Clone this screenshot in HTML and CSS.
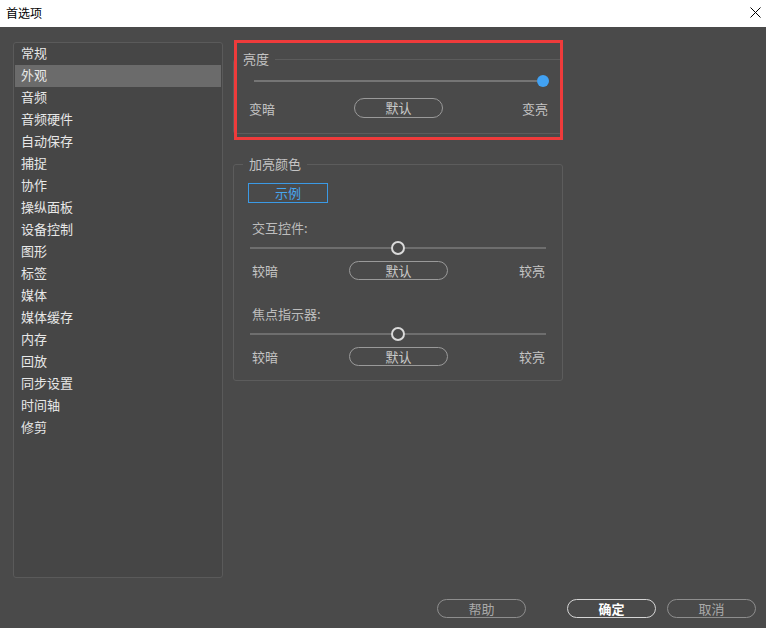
FILE: index.html
```html
<!DOCTYPE html>
<html lang="zh-CN">
<head>
<meta charset="utf-8">
<title>首选项</title>
<link rel="stylesheet" href="styles.css">
</head>
<body>
<div class="titlebar">
  <span class="title">首选项</span>
  <svg class="close" width="11" height="11" viewBox="0 0 11 11"><path d="M0.5 0.5L10.5 10.5M10.5 0.5L0.5 10.5" stroke="#000" stroke-width="1" fill="none"/></svg>
</div>
<div class="main">
  <ul class="sidebar">
    <li>常规</li>
    <li class="selected">外观</li>
    <li>音频</li>
    <li>音频硬件</li>
    <li>自动保存</li>
    <li>捕捉</li>
    <li>协作</li>
    <li>操纵面板</li>
    <li>设备控制</li>
    <li>图形</li>
    <li>标签</li>
    <li>媒体</li>
    <li>媒体缓存</li>
    <li>内存</li>
    <li>回放</li>
    <li>同步设置</li>
    <li>时间轴</li>
    <li>修剪</li>
  </ul>
  <div class="content">
    <div class="bright-wrap">
      <fieldset class="group bright">
        <legend>亮度</legend>
        <div class="slider bright-slider">
          <div class="track"></div>
          <div class="knob-blue"></div>
        </div>
        <div class="label-row bright-row">
          <span>变暗</span>
          <span class="pill">默认</span>
          <span>变亮</span>
        </div>
      </fieldset>
      <div class="highlight"></div>
    </div>
    <fieldset class="group accent">
      <legend>加亮颜色</legend>
      <div class="sample">示例</div>
      <div class="caption first">交互控件:</div>
      <div class="slider">
        <div class="track"></div>
        <div class="knob"></div>
        <div class="track"></div>
      </div>
      <div class="label-row">
        <span>较暗</span>
        <span class="pill wide">默认</span>
        <span>较亮</span>
      </div>
      <div class="caption">焦点指示器:</div>
      <div class="slider">
        <div class="track"></div>
        <div class="knob"></div>
        <div class="track"></div>
      </div>
      <div class="label-row">
        <span>较暗</span>
        <span class="pill wide">默认</span>
        <span>较亮</span>
      </div>
    </fieldset>
  </div>
</div>
<div class="footer">
  <span class="pill btn help">帮助</span>
  <span class="pill btn ok">确定</span>
  <span class="pill btn">取消</span>
</div>
</body>
</html>
```
FILE: styles.css
```css
html, body {
  margin: 0;
  padding: 0;
}
body {
  width: 766px;
  height: 628px;
  background: #4a4a4a;
  font-family: "Noto Sans CJK SC", "Noto Sans", sans-serif;
  font-size: 13px;
  color: #c4c4c4;
  display: flex;
  flex-direction: column;
  overflow: hidden;
}
.titlebar {
  height: 27px;
  flex: none;
  background: #ffffff;
  display: flex;
  align-items: center;
  justify-content: space-between;
  padding: 0 5px 0 6px;
}
.title {
  font-size: 12px;
  color: #000;
  line-height: 16px;
  margin-top: -2px;
}
.close {
  margin-top: -3px;
}
.main {
  flex: 1;
  display: flex;
  padding: 13px 0 0 13px;
  min-height: 0;
}
.sidebar {
  list-style: none;
  margin: 2px 0 0 0;
  padding: 0 1px;
  box-sizing: border-box;
  width: 210px;
  height: 536px;
  border: 1px solid #5a5a5a;
  border-radius: 3px;
  background: #464646;
}
.sidebar li {
  height: 22px;
  box-sizing: border-box;
  line-height: 20px;
  padding: 0 0 2px 6px;
  color: #e8e8e8;
}
.sidebar li.selected {
  background: #6b6b6b;
}
.content {
  margin-left: 10px;
  width: 330px;
  display: flex;
  flex-direction: column;
}
.bright-wrap {
  position: relative;
  height: 100px;
}
.group {
  margin: 0;
  border: 1px solid #5c5c5c;
  border-radius: 3px;
  min-width: 0;
}
.group legend {
  line-height: 16px;
  color: #c4c4c4;
}
.bright {
  margin-top: 11px;
  padding: 0;
  height: 83px;
  box-sizing: border-box;
}
.bright legend {
  padding: 0 6px 0 9px;
}
.highlight {
  position: absolute;
  left: 1px;
  top: 0;
  width: 329px;
  height: 100px;
  box-sizing: border-box;
  border: 3px solid #ee3b3b;
  pointer-events: none;
}
.slider {
  display: flex;
  align-items: center;
  height: 14px;
  margin: 5px 1px 0 1px;
}
.track {
  flex: 1;
  height: 2px;
  background: #6e6e6e;
}
.knob {
  width: 14px;
  height: 14px;
  box-sizing: border-box;
  border: 2px solid #dadada;
  border-radius: 50%;
  background: #4a4a4a;
  flex: none;
}
.bright-slider {
  margin: 7px 13px 0 20px;
}
.bright-slider .track {
  background: #757575;
}
.knob-blue {
  width: 12px;
  height: 12px;
  border-radius: 50%;
  background: #42a2f3;
  flex: none;
}
.label-row {
  display: flex;
  align-items: center;
  justify-content: space-between;
  height: 19px;
  margin-top: 6px;
  padding: 0 2px 0 3px;
  line-height: 19px;
}
.bright-row {
  margin-top: 10px;
  padding: 0 14px 0 15px;
  height: 20px;
}
.pill {
  box-sizing: border-box;
  width: 89px;
  height: 20px;
  border: 1px solid #9a9a9a;
  border-radius: 10px;
  text-align: center;
  line-height: 18px;
  color: #cacaca;
}
.pill.wide {
  width: 99px;
  height: 19px;
  line-height: 17px;
}
.accent {
  margin-top: 16px;
  padding: 0 15px 14px 15px;
}
.accent legend {
  padding: 0 6px;
  margin-left: -6px;
}
.sample {
  box-sizing: border-box;
  width: 80px;
  height: 20px;
  margin: 11px 0 0 -1px;
  border: 1px solid #3b9ae6;
  color: #47a6f0;
  text-align: center;
  line-height: 18px;
}
.caption {
  line-height: 16px;
  height: 16px;
  margin-top: 26px;
  padding-left: 3px;
  color: #bdbdbd;
}
.caption.first {
  margin-top: 17px;
}
.footer {
  flex: none;
  display: flex;
  justify-content: flex-end;
  padding: 0 10px 10px 0;
}
.btn {
  height: 19px;
  line-height: 17px;
  border-color: #8e8e8e;
  color: #a9a9a9;
}
.btn.help {
  margin-right: 41px;
}
.btn.ok {
  margin-right: 11px;
  border-color: #d6d6d6;
  color: #ffffff;
  font-weight: bold;
}
```
